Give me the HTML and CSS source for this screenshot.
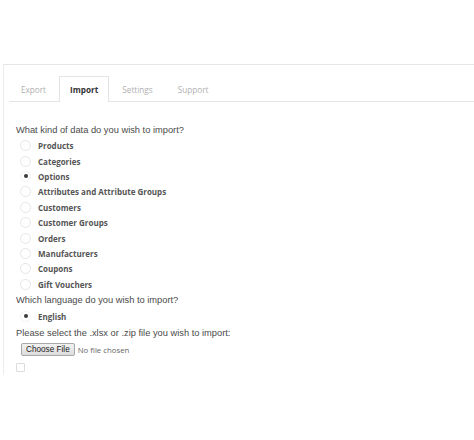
FILE: index.html
```html
<!DOCTYPE html>
<html>
<head>
<meta charset="utf-8">
<link rel="stylesheet" href="styles.css">
</head>
<body>
<div class="panel">
  <ul class="tabs">
    <li class="tab">Export</li>
    <li class="tab active">Import</li>
    <li class="tab">Settings</li>
    <li class="tab">Support</li>
  </ul>
  <div class="content">
    <div class="question">What kind of data do you wish to import?</div>
    <div class="options">
      <label class="opt"><span class="radio"></span>Products</label>
      <label class="opt"><span class="radio"></span>Categories</label>
      <label class="opt"><span class="radio checked"></span>Options</label>
      <label class="opt"><span class="radio"></span>Attributes and Attribute Groups</label>
      <label class="opt"><span class="radio"></span>Customers</label>
      <label class="opt"><span class="radio"></span>Customer Groups</label>
      <label class="opt"><span class="radio"></span>Orders</label>
      <label class="opt"><span class="radio"></span>Manufacturers</label>
      <label class="opt"><span class="radio"></span>Coupons</label>
      <label class="opt"><span class="radio"></span>Gift Vouchers</label>
    </div>
    <div class="question">Which language do you wish to import?</div>
    <label class="opt lang"><span class="radio checked"></span>English</label>
    <div class="question">Please select the .xlsx or .zip file you wish to import:</div>
    <div class="file-row">
      <span class="file-btn">Choose File</span>
      <span class="file-name">No file chosen</span>
    </div>
    <div class="check-row"><span class="checkbox"></span></div>
  </div>
</div>
</body>
</html>
```
FILE: styles.css
```css
html, body {
  margin: 0;
  padding: 0;
  background: #fff;
}
body {
  width: 474px;
  height: 440px;
  overflow: hidden;
  font-family: "Liberation Sans", Arial, sans-serif;
}
.panel {
  margin-top: 64px;
  margin-left: 3px;
  width: 471px;
  height: 311px;
  border-top: 1px solid #e6e6e6;
  border-left: 1px solid #ececec;
  box-sizing: border-box;
  padding: 11px 0 0 5px;
}
.tabs {
  list-style: none;
  margin: 0;
  padding: 0;
  display: flex;
  border-bottom: 1px solid #e4e4e4;
  height: 25px;
}
.tab {
  font-family: "Open Sans", sans-serif;
  font-size: 8.2px;
  color: #b0b0b0;
  height: 25px;
  line-height: 25px;
  padding: 0 11px;
  margin-right: 1px;
  box-sizing: border-box;
  border: 1px solid transparent;
  border-bottom: none;
}
.tab.active {
  color: #333;
  font-weight: 700;
  background: #fff;
  border-color: #e4e4e4;
  height: 26px;
  padding: 0 10px;
}
.content {
  padding: 20px 0 0 7px;
  color: #444;
}
.question {
  font-size: 9.3px;
  line-height: 16px;
  height: 16px;
  color: #4a4a4a;
}
.options {
  display: flex;
  flex-direction: column;
}
.opt {
  display: flex;
  align-items: center;
  height: 15.4px;
  font-family: "Open Sans", sans-serif;
  font-weight: 700;
  font-size: 8px;
  color: #555;
}
.opt.lang {
  height: 17px;
}
.radio {
  width: 11px;
  height: 11px;
  border-radius: 50%;
  border: 1px solid #e6e6e6;
  box-sizing: border-box;
  margin-left: 4px;
  margin-right: 7px;
  position: relative;
  background: #fff;
}
.radio.checked {
  border-color: #f2f2f2;
}
.radio.checked::after {
  content: "";
  position: absolute;
  left: 2.5px;
  top: 2.5px;
  width: 4px;
  height: 4px;
  border-radius: 50%;
  background: #3a3a3a;
}
.file-row {
  display: flex;
  align-items: center;
  height: 16px;
  margin-top: 1px;
  padding-left: 5px;
}
.file-btn {
  font-size: 8.2px;
  color: #222;
  height: 13px;
  line-height: 11px;
  padding: 0 4px;
  box-sizing: border-box;
  border: 1px solid #a8a8a8;
  border-radius: 2px;
  background: linear-gradient(#f2f2f2, #dcdcdc);
}
.file-name {
  font-family: "Open Sans", sans-serif;
  font-size: 7.8px;
  color: #666;
  margin-left: 3px;
}
.check-row {
  padding-top: 5px;
}
.checkbox {
  display: block;
  width: 9px;
  height: 9px;
  border: 1px solid #dcdcdc;
  box-sizing: border-box;
  border-radius: 1px;
}
```
